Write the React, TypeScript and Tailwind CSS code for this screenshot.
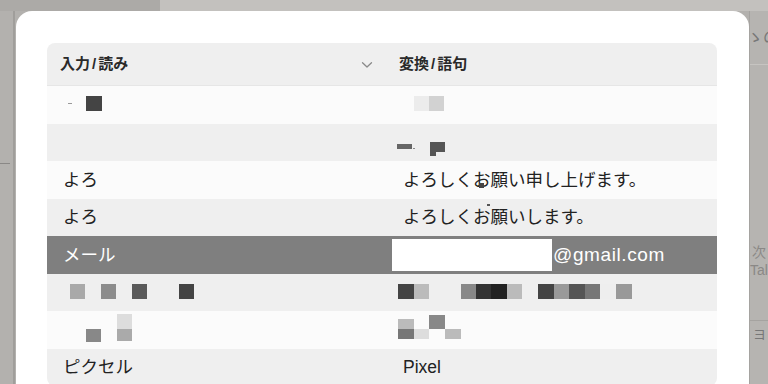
import React from "react";

type Sq = { x: number; y: number; w: number; h: number; c: string };

const rows: {
  left?: string;
  right?: string;
  bg: string;
  selected?: boolean;
  leftSq?: Sq[];
  rightSq?: Sq[];
}[] = [
  {
    bg: "bg-[#fbfbfb]",
    leftSq: [
      { x: 21, y: 17, w: 4, h: 1, c: "#999" },
      { x: 39, y: 10, w: 16, h: 15, c: "#444" },
    ],
    rightSq: [
      { x: 27, y: 10, w: 15, h: 15, c: "#ececec" },
      { x: 42, y: 10, w: 15, h: 15, c: "#d2d2d2" },
    ],
  },
  {
    bg: "bg-[#efefef]",
    rightSq: [
      { x: 10, y: 20, w: 15, h: 5, c: "#666" },
      { x: 26, y: 24, w: 2, h: 1, c: "#888" },
      { x: 43, y: 18, w: 15, h: 10, c: "#555" },
      { x: 43, y: 28, w: 6, h: 4, c: "#555" },
    ],
  },
  {
    bg: "bg-[#fbfbfb]",
    left: "よろ",
    right: "よろしくお願い申し上げます。",
    rightSq: [{ x: 92, y: 22, w: 5, h: 5, c: "#444" }],
  },
  {
    bg: "bg-[#efefef]",
    left: "よろ",
    right: "よろしくお願いします。",
    rightSq: [{ x: 100, y: 5, w: 3, h: 2, c: "#555" }],
  },
  { bg: "bg-[#7f7f7f]", left: "メール", selected: true },
  {
    bg: "bg-[#efefef]",
    leftSq: [
      { x: 23, y: 10, w: 15, h: 15, c: "#a9a9a9" },
      { x: 54, y: 10, w: 15, h: 15, c: "#8c8c8c" },
      { x: 85, y: 10, w: 15, h: 15, c: "#5a5a5a" },
      { x: 132, y: 10, w: 15, h: 15, c: "#444" },
    ],
    rightSq: [
      { x: 11, y: 10, w: 16, h: 15, c: "#444" },
      { x: 27, y: 10, w: 15, h: 15, c: "#bbb" },
      { x: 74, y: 10, w: 15, h: 15, c: "#888" },
      { x: 89, y: 10, w: 15, h: 15, c: "#333" },
      { x: 104, y: 10, w: 16, h: 15, c: "#222" },
      { x: 120, y: 10, w: 15, h: 15, c: "#bbb" },
      { x: 151, y: 10, w: 16, h: 15, c: "#444" },
      { x: 167, y: 10, w: 15, h: 15, c: "#999" },
      { x: 182, y: 10, w: 16, h: 15, c: "#555" },
      { x: 198, y: 10, w: 15, h: 15, c: "#777" },
      { x: 213, y: 10, w: 16, h: 15, c: "#eee" },
      { x: 229, y: 10, w: 16, h: 15, c: "#999" },
    ],
  },
  {
    bg: "bg-[#fbfbfb]",
    leftSq: [
      { x: 39, y: 18, w: 15, h: 13, c: "#888" },
      { x: 70, y: 3, w: 15, h: 15, c: "#ddd" },
      { x: 70, y: 18, w: 15, h: 12, c: "#aaa" },
    ],
    rightSq: [
      { x: 11, y: 8, w: 16, h: 10, c: "#bbb" },
      { x: 11, y: 18, w: 16, h: 10, c: "#777" },
      { x: 27, y: 18, w: 15, h: 10, c: "#ddd" },
      { x: 42, y: 4, w: 16, h: 14, c: "#888" },
      { x: 58, y: 18, w: 16, h: 10, c: "#bbb" },
    ],
  },
  { bg: "bg-[#efefef]", left: "ピクセル", right: "Pixel" },
];

/* mosaic (redaction) blocks that lie over the cell */
function Mosaic({ list }: { list?: Sq[] }) {
  if (!list) return null;
  return (
    <>
      {list.map((s, i) => (
        <div
          key={i}
          className="absolute"
          style={{ left: s.x, top: s.y, width: s.w, height: s.h, background: s.c }}
        />
      ))}
    </>
  );
}

export default function App() {
  const font = {
    fontFamily: '"Liberation Sans", "Noto Sans CJK JP", sans-serif',
  };
  return (
    <div
      className="w-[768px] h-[384px] overflow-hidden bg-[#b3b1ae] flex flex-col"
      style={font}
    >
      {/* top strip of the window behind */}
      <div className="flex h-[11px] shrink-0">
        <div className="w-[160px] bg-[#acaaa7]" />
        <div className="flex-1 bg-[#c3c1be]" />
      </div>

      <div className="flex flex-1 min-h-0">
        {/* left strip */}
        <div className="w-[16px] shrink-0 flex">
          <div className="w-[13px] flex flex-col">
            <div className="h-[152px]" />
            <div className="w-[10px] h-[1px] bg-[#8a8886]" />
          </div>
          <div className="w-[2px] bg-[#a09e9b]" />
        </div>

        {/* modal */}
        <div className="w-[733px] shrink-0 h-[420px] bg-white rounded-t-[16px] px-[31px] pt-[32px]">
          <div className="rounded-[8px] overflow-hidden w-[670px]">
            {/* header */}
            <div className="flex h-[43px] bg-[#efefef] border-b border-[#e6e6e6] text-[15px] font-semibold text-[#2a2a2a]">
              <div className="w-[340px] flex items-center pl-[13px] pr-[14px] justify-between">
                <span>
                  入力<span className="mx-[2px]">/</span>読み
                </span>
                <svg width="12" height="8" viewBox="0 0 12 8" className="mt-[1px]">
                  <path
                    d="M1.5 1.8 L6 6 L10.5 1.8"
                    fill="none"
                    stroke="#8a8a8a"
                    strokeWidth="1.3"
                    strokeLinecap="round"
                    strokeLinejoin="round"
                  />
                </svg>
              </div>
              <div className="flex-1 flex items-center pl-[12px]">
                変換<span className="mx-[2px]">/</span>語句
              </div>
            </div>
            {rows.map((r, i) => (
              <div
                key={i}
                className={`flex h-[37.5px] text-[17.5px] ${r.bg} ${
                  r.selected ? "text-white" : "text-[#222]"
                }`}
              >
                <div className="relative w-[340px] flex items-center pl-[16px]">
                  <Mosaic list={r.leftSq} />
                  {r.left}
                </div>
                <div className="relative flex-1 flex items-center pl-[5px]">
                  {r.selected ? (
                    <div className="flex items-center">
                      <div className="w-[160px] h-[32px] bg-white" />
                      <span className="text-[19px] tracking-[0.6px] ml-[1px]">@gmail.com</span>
                    </div>
                  ) : (
                    <span className="pl-[11px]">{r.right}</span>
                  )}
                  <Mosaic list={r.rightSq} />
                </div>
              </div>
            ))}
          </div>
        </div>

        {/* right panel of the window behind */}
        <div className="flex-1 bg-[#b6b4b1] border-l border-[#a5a3a0] flex flex-col overflow-hidden text-[#8a8886]">
          <div className="h-[53px] flex items-center -ml-[3px] text-[16px] text-[#777] whitespace-nowrap">ゝの</div>
          <div className="h-[1px] bg-[#c6c4c1]" />
          <div className="h-[178px]" />
          <div className="text-[14px] leading-[18px] pl-[2px]">次</div>
          <div className="text-[14px] leading-[18px]">Tal</div>
          <div className="h-[41px]" />
          <div className="h-[1px] bg-[#a5a3a0]" />
          <div className="text-[13px] leading-[28px] pl-[3px] text-[#777]">ヨ</div>
        </div>
      </div>
    </div>
  );
}
